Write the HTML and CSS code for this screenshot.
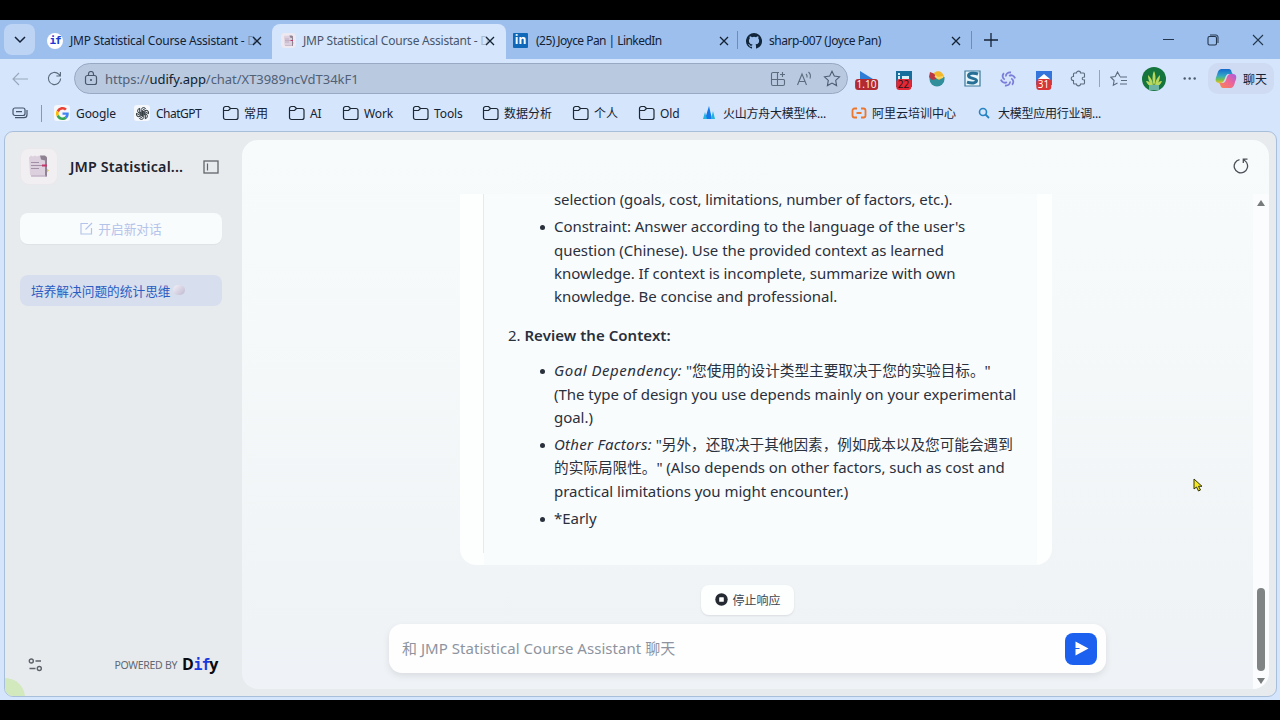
FILE: index.html
```html
<!DOCTYPE html>
<html lang="zh-CN">
<head>
<meta charset="utf-8">
<title>JMP Statistical Course Assistant</title>
<link rel="stylesheet" href="styles.css">
</head>
<body>
<svg width="0" height="0" class="defs">
  <symbol id="folder" viewBox="0 0 18 16"><path d="M1.500 12.500v-9a2 2 0 0 1 2-2h3l2 2H14a2 2 0 0 1 2 2v7a2 2 0 0 1-2 2H3.500a2 2 0 0 1-2-2zM1.500 5.500h5l2-2" fill="none" stroke="#1c2733" stroke-width="1.200"/></symbol>
  <symbol id="close" viewBox="0 0 10 10"><path d="M1 1l8 8M9 1l-8 8" stroke="#142234" stroke-width="1.300"/></symbol>
  <symbol id="doc" viewBox="0 0 24 24"><path d="M2 3l2-2 2 1 2-1 2 1 2-1 3 1h5v20H5l-2-2z" fill="#ddd0de"/><path d="M13 1l1 4 4 1v16h2V3l-2-2z" fill="#8f8292"/><path d="M4 22h15v-1H4z" fill="#b7a7ba"/><path d="M4 8h8M4 11h11M4 14h8" stroke="#a38fa6" stroke-width="1"/><path d="M15 10h5v2h-5z" fill="#c3366a"/><path d="M20 14l2 2-2 2z" fill="#e2cc55"/></symbol>
</svg>
<div class="browser">
  <div class="tabs">
    <div class="tab-menu"><svg width="14" height="9" viewBox="0 0 14 9"><path d="M2 2l5 5 5-5" fill="none" stroke="#132238" stroke-width="1.500"/></svg></div>
    <div class="tab first"><span class="if-badge">if</span><span class="tab-title">JMP Statistical Course Assistant - <i class="fade">D</i></span><svg class="x"><use href="#close"/></svg></div>
    <div class="tab active"><span class="doc-badge"><svg width="12" height="12"><use href="#doc"/></svg></span><span class="tab-title">JMP Statistical Course Assistant - <i class="fade">D</i></span><svg class="x"><use href="#close"/></svg></div>
    <div class="tab third"><span class="li">in</span><span class="tab-title li-title">(25) Joyce Pan | LinkedIn</span><svg class="x"><use href="#close"/></svg></div>
    <div class="tab fourth"><svg width="16" height="16" viewBox="0 0 16 16"><path fill="#12263c" d="M8 0a8 8 0 0 0-2.530 15.590c.4.070.55-.17.550-.38v-1.490c-2.220.480-2.690-.94-2.690-.94-.36-.92-.89-1.170-.89-1.170-.73-.5.060-.49.060-.49.800.060 1.230.830 1.230.830.710 1.220 1.870.870 2.330.660.070-.52.280-.87.510-1.070-1.780-.2-3.640-.89-3.640-3.950 0-.87.310-1.590.820-2.150-.08-.2-.36-1.010.080-2.120 0 0 .67-.21 2.200.820a7.600 7.600 0 0 1 4 0c1.530-1.030 2.200-.82 2.200-.82.440 1.110.160 1.920.080 2.120.510.560.820 1.280.820 2.150 0 3.070-1.870 3.750-3.650 3.950.290.250.540.730.540 1.480v2.190c0 .21.150.46.550.38A8 8 0 0 0 8 0z"/></svg><span class="tab-title gh-title">sharp-007 (Joyce Pan)</span><svg class="x"><use href="#close"/></svg></div>
    <svg class="plus" viewBox="0 0 14 14"><path d="M7 0v14M0 7h14" stroke="#142234" stroke-width="1.300"/></svg>
    <div class="window-btns">
      <svg width="11" height="11" viewBox="0 0 11 11"><path d="M0 5.500h11" stroke="#23364e"/></svg>
      <svg width="12" height="12" viewBox="0 0 12 12"><rect x="1" y="2.500" width="8.500" height="8.500" rx="1.500" fill="none" stroke="#23364e" stroke-width="1.100"/><path d="M3 1h6a2 2 0 0 1 2 2v6" fill="none" stroke="#23364e"/></svg>
      <svg width="12" height="12" viewBox="0 0 12 12"><path d="M1 1l10 10M11 1L1 11" stroke="#23364e" stroke-width="1.100"/></svg>
    </div>
  </div>

  <div class="toolbar">
    <svg class="back" width="16" height="14" viewBox="0 0 16 14"><path d="M16 7H1M7 1L1 7l6 6" fill="none" stroke="#98a7bb" stroke-width="1.100"/></svg>
    <svg class="reload" width="15" height="15" viewBox="0 0 16 16"><path d="M14.500 8A6.500 6.500 0 1 1 12.500 3.300L14 5M14.300 1v4.300H10" fill="none" stroke="#5b6a7d" stroke-width="1.200"/></svg>
    <div class="address">
      <svg width="14" height="15" viewBox="0 0 14 15"><rect x="1.500" y="4.500" width="11" height="9" rx="2" fill="none" stroke="#4a586b" stroke-width="1.200"/><path d="M4.500 4.500V3a2.500 2.500 0 0 1 5 0v1.500" fill="none" stroke="#4a586b" stroke-width="1.200"/><circle cx="7" cy="9" r="1" fill="#3e4c5e"/></svg>
      <span class="url">https://<b>udify.app</b>/chat/XT3989ncVdT34kF1</span>
      <svg width="16" height="16" viewBox="0 0 16 16"><path d="M9 1.500H3A1.500 1.500 0 0 0 1.500 3v10A1.500 1.500 0 0 0 3 14.500h10a1.500 1.500 0 0 0 1.500-1.500V9.500a1 1 0 0 0-1-1h-12M7.500 1.500v13M12.500 1v5M10 3.500h5" fill="none" stroke="#5c6b7e" stroke-width="1.100"/></svg>
      <svg width="17" height="16" viewBox="0 0 17 16"><path d="M1.500 14L6 3l4.500 11M3 10.500h6M10 3c1.300 1 1.300 2 1 3.500M12.500 1c2 1.700 2.300 4 1.500 6.500" fill="none" stroke="#5c6b7e" stroke-width="1.100"/></svg>
      <svg width="18" height="17" viewBox="0 0 18 17"><path d="M9 1.300l2.300 4.700 5.200.8-3.800 3.600.9 5.200L9 13.100l-4.600 2.500.9-5.200L1.500 6.800 6.700 6z" fill="none" stroke="#4c5c71" stroke-width="1.100"/></svg>
    </div>
    <div class="ext">
      <span class="ico jmp"><svg width="24" height="20" viewBox="0 0 24 20"><path d="M5 2l13 8H5z" fill="#2d7cd6"/></svg><em>1.10</em></span>
      <span class="ico lin"><svg width="18" height="20" viewBox="0 0 18 20"><path d="M1 2h16v16H1z" fill="#176d9c"/><path d="M3 4h2v2H3zM3 7h2v5H3zM7 7h2v5H7zM9 7h5v3H9z" fill="#d8effa"/></svg><em>22</em></span>
      <span class="ico"><svg width="18" height="18" viewBox="0 0 18 18"><path d="M1.500 7h15v2a7.500 7.500 0 0 1-15 0z" fill="#318e9b"/><path d="M1 7l1-5 5 2 1 5-4 1z" fill="#b93743"/><path d="M6 3c3-3 9-2 10 4l-5 3-3-2z" fill="#f2b82c"/><path d="M7 6l3 2 5-1" stroke="#f7d769" stroke-width="2" fill="none"/></svg></span>
      <span class="ico"><svg width="17" height="17" viewBox="0 0 17 17"><path d="M1 1h15v15H1z" fill="#e8f6fb" stroke="#3b789b" stroke-width="1.200"/><path d="M14 4C10 2.500 4.500 3 4.500 5.800c0 3.200 8 2 8 4.800 0 2.700-5 3-9.500 1.500" fill="none" stroke="#286f96" stroke-width="3"/></svg></span>
      <span class="ico"><svg width="16" height="16" viewBox="-8 -8 16 16" fill="none" stroke="#7b7ddb" stroke-width="1.800"><path id="petal" d="M-2-2.500C-2.500-5 0-7 3-6.500"/><use href="#petal" transform="rotate(60)"/><use href="#petal" transform="rotate(120)"/><use href="#petal" transform="rotate(180)"/><use href="#petal" transform="rotate(240)"/><use href="#petal" transform="rotate(300)"/></svg></span>
      <span class="ico cal"><svg width="18" height="20" viewBox="0 0 18 20"><path d="M1 2h16v14H1z" fill="#3475dc"/><path d="M3 10l6-5 6 5v5H3z" fill="white"/></svg><em>31</em></span>
      <span class="ico"><svg width="17" height="17" viewBox="0 0 17 17"><path d="M4.500 3h2c0-2.500 4-2.500 4 0h3A1 1 0 0 1 14.500 4v3c-3-.5-3 3.500 0 3v3a1 1 0 0 1-1 1h-3c0 2.500-4 2.500-4 0h-2a1 1 0 0 1-1-1v-2.500c-3 0-3-4 0-4V4a1 1 0 0 1 1-1z" fill="none" stroke="#5c6b7e" stroke-width="1.100"/></svg></span>
      <span class="divider"></span>
      <span class="ico"><svg width="18" height="16" viewBox="0 0 18 16"><path d="M10 5.500L7.500 1 5.300 5.500.8 6.200l3.300 3.300-.8 4.700L7.500 12M10 6h7M11 9.500h6M10 13h7" fill="none" stroke="#5c6b7e" stroke-width="1.100"/></svg></span>
      <span class="ico"><svg width="24" height="24" viewBox="0 0 24 24"><circle cx="12" cy="12" r="12" fill="#14753d"/><path d="M12 19C10 14 10 8 12 4c2 4 2 10 0 15zM11 19C8 17 6 13 6 8c3 3 5 6 5 11zM13 19c0-5 2-8 5-11 0 5-2 9-5 11zM10 19c-3 0-5-2-6-5 3 0 5 2 6 5zM14 19c1-3 3-5 6-5-1 3-3 5-6 5z" fill="#b9d85d"/><path d="M7 18h10v5H7z" fill="#6db5a2"/></svg></span>
      <span class="dots"><svg width="14" height="3" viewBox="0 0 14 3" fill="#4b5a6d"><circle cx="1.700" cy="1.500" r="1.200"/><circle cx="6.700" cy="1.500" r="1.200"/><circle cx="11.700" cy="1.500" r="1.200"/></svg></span>
    </div>
    <div class="copilot"><svg width="22" height="21" viewBox="0 0 22 21"><defs><linearGradient id="ca" x1="0" y1="0" x2="0" y2="1"><stop stop-color="#1668cf"/><stop offset=".5" stop-color="#32a9c4"/><stop offset=".75" stop-color="#6fc053"/><stop offset="1" stop-color="#f0c02c"/></linearGradient><linearGradient id="cb" x1="1" y1="0" x2="0" y2="1"><stop stop-color="#a65be4"/><stop offset=".5" stop-color="#f06693"/><stop offset="1" stop-color="#f88848"/></linearGradient></defs><path d="M7 1h7c3 0 2 4 4 5h-5c-3 0-3 9-7 9H4c-4 0-4-4-2-8 1-4 2-6 5-6z" fill="url(#ca)"/><path d="M15 20H8c-3 0-2-4-4-5h4c4 0 3-9 7-9h3c4 0 4 4 2 8-1 4-2 6-5 6z" fill="url(#cb)"/></svg><span>聊天</span></div>
  </div>

  <div class="bookmarks">
    <svg width="16" height="12" viewBox="0 0 16 12"><rect x="1" y="1" width="12" height="7.500" rx="2" fill="none" stroke="#45566c" stroke-width="1.200"/><path d="M4 4.700h6M3 10.700h9a3 3 0 0 0 3-3V3" fill="none" stroke="#45566c" stroke-width="1.200"/></svg>
    <span class="divider"></span>
    <div class="bm"><span class="tile"><svg width="13" height="13" viewBox="0 0 48 48"><path fill="#ea4335" d="M24 9.500c3.500 0 6.700 1.200 9.200 3.600l6.900-6.900A24 24 0 0 0 2.600 13.200l8 6.200A14.300 14.300 0 0 1 24 9.500z"/><path fill="#4285f4" d="M47 24.500c0-1.600-.2-3.100-.4-4.500H24v9h13c-.6 3-2.300 5.500-4.800 7.200l7.700 6c4.500-4.200 7.100-10.400 7.100-17.700z"/><path fill="#fbbc05" d="M10.500 28.600a14 14 0 0 1 0-9.200l-8-6.200a24 24 0 0 0 0 21.600z"/><path fill="#34a853" d="M24 48c6.500 0 12-2.100 15.900-5.800l-7.700-6A14.500 14.500 0 0 1 10.500 28.600l-8 6.200A24 24 0 0 0 24 48z"/></svg></span><span class="en">Google</span></div>
    <div class="bm gpt"><span class="tile"><svg width="13" height="13" viewBox="-8 -8 16 16" fill="none" stroke="#343c40" stroke-width="1.200"><path id="gp" d="M-1.500-1L-1.500-5a3 3 0 0 1 5.200-1.200L0-4v4"/><use href="#gp" transform="rotate(60)"/><use href="#gp" transform="rotate(120)"/><use href="#gp" transform="rotate(180)"/><use href="#gp" transform="rotate(240)"/><use href="#gp" transform="rotate(300)"/></svg></span><span class="en">ChatGPT</span></div>
    <div class="bm"><svg class="f"><use href="#folder"/></svg><span>常用</span></div>
    <div class="bm"><svg class="f"><use href="#folder"/></svg><span class="en">AI</span></div>
    <div class="bm"><svg class="f"><use href="#folder"/></svg><span class="en">Work</span></div>
    <div class="bm"><svg class="f"><use href="#folder"/></svg><span class="en">Tools</span></div>
    <div class="bm"><svg class="f"><use href="#folder"/></svg><span>数据分析</span></div>
    <div class="bm"><svg class="f"><use href="#folder"/></svg><span>个人</span></div>
    <div class="bm"><svg class="f"><use href="#folder"/></svg><span class="en">Old</span></div>
    <div class="bm volcano"><svg width="14" height="14" viewBox="0 0 14 14"><path d="M7 0l3 13H3z" fill="#1478ed"/><path d="M3 6l2 7H1zM11 5l2 8H9z" fill="#25b4db"/></svg><span>火山方舟大模型体...</span></div>
    <div class="bm ali"><svg width="16" height="12" viewBox="0 0 16 12"><path d="M6 1.500H3.500a2 2 0 0 0-2 2v5a2 2 0 0 0 2 2H6M10 1.500h2.500a2 2 0 0 1 2 2v5a2 2 0 0 1-2 2H10M5.500 6h5" fill="none" stroke="#ec762c" stroke-width="1.800"/></svg><span>阿里云培训中心</span></div>
    <div class="bm search"><svg width="12" height="12" viewBox="0 0 12 12"><circle cx="5" cy="5" r="3.500" fill="none" stroke="#2583c4" stroke-width="1.600"/><path d="M7.500 7.500L11 11" stroke="#2583c4" stroke-width="1.800"/></svg><span>大模型应用行业调...</span></div>
  </div>

  <div class="page">
    <aside class="sidebar">
      <div class="app-head"><div class="app-icon"><svg width="24" height="25"><use href="#doc"/></svg></div><strong>JMP Statistical...</strong><svg width="16" height="14" viewBox="0 0 16 14"><rect x="1" y="1" width="14" height="12" fill="none" stroke="#62666c" stroke-width="1.300"/><path d="M4.500 3.500v7" stroke="#62666c" stroke-width="1.200"/></svg></div>
      <div class="new-chat"><svg width="13" height="13" viewBox="0 0 13 13"><path d="M8 1.500H1v10.500h10.500V6M5.500 7.500l6.500-6.500" fill="none" stroke="#b4c3ea" stroke-width="1.200"/></svg><span>开启新对话</span></div>
      <div class="conversation"><span>培养解决问题的统计思维</span><i></i></div>
      <div class="side-foot"><svg width="15" height="14" viewBox="0 0 15 14"><g fill="none" stroke="#5c626a" stroke-width="1.400"><circle cx="3.300" cy="3" r="2"/><path d="M7.500 3H13M1.500 10.500h6"/><circle cx="11.300" cy="10.500" r="2"/></g></svg><span class="powered">POWERED BY</span><span class="dify">D<b>if</b>y</span></div>
      <div class="corner"></div>
    </aside>
    <main class="main">
      <header><svg width="16" height="16" viewBox="0 0 16 16"><path d="M6.500 1.600A6.700 6.700 0 1 0 13.500 4.500" fill="none" stroke="#4c5157" stroke-width="1.300"/><path d="M10.300 5V1.200H14.500M10.500 1.400l3.300 3.200" fill="none" stroke="#4c5157" stroke-width="1.300"/></svg></header>
      <div class="body">
        <div class="chat">
          <div class="scroll">
            <div class="bubble"><div class="thought">
              <ul class="cont">
                <li class="nomark">selection (goals, cost, limitations, number of factors, etc.).</li>
                <li>Constraint: Answer according to the language of the user's<br>question (Chinese). Use the provided context as learned<br>knowledge. If context is incomplete, summarize with own<br>knowledge. Be concise and professional.</li>
              </ul>
              <div class="step"><span>2.</span> <b>Review the Context:</b></div>
              <ul>
                <li><em class="g">Goal Dependency:</em> "<span class="cj">您使用的设计类型主要取决于您的实验目标。</span>"<br>(The type of design you use depends mainly on your experimental<br>goal.)</li>
                <li><em class="o">Other Factors:</em> "<span class="cj">另外，还取决于其他因素，例如成本以及您可能会遇到<br>的实际局限性。</span>" (Also depends on other factors, such as cost and<br>practical limitations you might encounter.)</li>
                <li>*Early</li>
              </ul>
            </div></div>
          </div>
          <div class="stop"><svg width="13" height="13" viewBox="0 0 13 13"><circle cx="6.500" cy="6.500" r="6.200" fill="#252932"/><rect x="4.200" y="4.200" width="4.600" height="4.600" rx=".6" fill="#fff"/></svg><span>停止响应</span></div>
          <div class="composer"><span>和 <u>JMP Statistical Course Assistant</u> 聊天</span><div class="send"><svg width="14" height="15" viewBox="0 0 14 15"><path d="M.5.500L13.500 7.500.5 14.500V8h4V6.900h-4z" fill="#fff"/></svg></div></div>
        </div>
        <div class="scrollbar"><svg width="8" height="6" viewBox="0 0 8 6"><path d="M4 0l4 6H0z" fill="#777b7c"/></svg><div class="thumb"></div><svg width="8" height="6" viewBox="0 0 8 6"><path d="M4 6l4-6H0z" fill="#777b7c"/></svg></div>
      </div>
    </main>
  </div>
  <svg class="cursor" width="10" height="14" viewBox="0 0 10 14"><path d="M1 1v10l2.500-2L5.500 13l2-1-2-3.700H9z" fill="#f4e820" stroke="#34350f" stroke-width="1"/></svg>
</div>
</body>
</html>
```
FILE: styles.css
```css
* { box-sizing: border-box; }
body { margin: 0; padding: 20px 0; width: 1280px; height: 720px; background: #000; overflow: hidden; font-family: "Noto Sans", "Noto Sans CJK SC", sans-serif; color: #142234; }
svg { display: block; flex: none; }
.defs { position: absolute; }
.browser { position: relative; height: 680px; display: flex; flex-direction: column; background: #d5e5fb; white-space: nowrap; }

.tabs { height: 39px; flex: none; display: flex; align-items: center; background: #9dbfed; font-size: 12px; }
.tab-menu { width: 31px; height: 31px; margin-left: 4px; border-radius: 8px; background: #bdd4f4; display: flex; align-items: center; justify-content: center; }
.tab { display: flex; align-items: center; height: 35px; margin-top: 4px; padding-bottom: 2px; flex: none; }
.tab-title { flex: 1; min-width: 0; margin-left: 7px; letter-spacing: -.23px; }
.fade { opacity: .3; font-style: normal; }
.x { width: 10px; height: 10px; }
.first { width: 237px; padding-left: 12px; padding-right: 10px; }
.if-badge { width: 16px; height: 16px; border-radius: 8px; background: #fff; color: #1b3bd6; font: bold 11px/15px "DejaVu Sans Mono", monospace; text-align: center; letter-spacing: -1px; }
.active { width: 234px; background: #d5e5fb; border-radius: 8px 8px 0 0; padding-left: 9px; padding-right: 11px; color: #47566b; }
.doc-badge { width: 15px; height: 15px; border-radius: 4px; background: #eee9f0; display: flex; align-items: center; justify-content: center; }
.third { width: 231px; padding-left: 7px; padding-right: 8px; }
.li { width: 15px; height: 15px; background: #0f68b8; border-radius: 1px; color: #fff; font: bold 12px/14px "Open Sans", sans-serif; text-align: center; }
.third .li-title { margin-left: 8px; letter-spacing: -.54px; }
.fourth .gh-title { letter-spacing: -.46px; }
.fourth { width: 233px; padding-left: 9px; padding-right: 9px; position: relative; }
.fourth::before, .fourth::after { content: ""; position: absolute; top: 7px; width: 1px; height: 18px; background: #6f8cb3; }
.fourth::before { left: 0; } .fourth::after { right: -2px; }
.plus { width: 14px; height: 14px; margin-left: 14px; }
.window-btns { margin-left: auto; margin-right: 16px; display: flex; gap: 33px; }

.toolbar { height: 39px; flex: none; display: flex; align-items: center; padding-left: 12px; }
.reload { margin: 0 1px 0 19px; }
.address { display: flex; align-items: center; width: 774px; height: 31px; margin-left: 11px; padding: 0 6px 0 9px; border: 1px solid #97a9c3; border-radius: 16px; background: #b9c9e0; flex: none; }
.url { flex: 1; margin-left: 7px; font-size: 13px; letter-spacing: -.04px; color: #506075; }
.url b { font-weight: 400; color: #0f1d2e; }
.address svg + svg { margin-left: 10px; }
.ext { display: grid; align-items: center; justify-items: center; grid-template-columns: 40px 33px 34px 37px 34px 37px 32px 9px 31px 40px 30px; }
.ext .ico:first-child { margin-left: -1px; }
.ico { position: relative; left: -1px; }
.ico em { position: absolute; left: 50%; bottom: -1px; transform: translateX(-50%); background: #d73536; color: #fff; border-radius: 3px; padding: 0 2px; font: 10px/11px "Open Sans", sans-serif; }
.ico.jmp em { background: #b22a32; }
.ico.lin em { background: #e42734; color: #22151c; }
.divider { width: 1px; height: 17px; background: #93a5be; }
.copilot { width: 66px; height: 31px; margin-left: 3px; border-radius: 10px; background: #cedbf2; display: flex; align-items: center; justify-content: center; gap: 6px; font-size: 12px; }

.bookmarks { height: 33px; flex: none; display: grid; align-items: center; grid-template-columns: 29px 13px 80px 88px 66px 54px 70px 70px 90px 66px 64px 149px 126px 130px; padding: 0 0 3px 12px; font-size: 12px; }
.bookmarks .divider { background: #8798b1; }
.bm { display: flex; align-items: center; }
.bm .f { width: 18px; height: 16px; margin-right: 4px; }
.bm .en { letter-spacing: -.1px; }
.gpt .en { letter-spacing: -.5px; }
.tile { width: 16px; height: 16px; background: #f4f8fd; border-radius: 3px; display: flex; align-items: center; justify-content: center; margin-right: 6px; }
.volcano svg { margin: 0 7px 0 0; } .ali svg { margin-right: 5px; } .search svg { margin: 0 8px 0 1px; }
.volcano span, .search span { letter-spacing: -.25px; }

.page { position: relative; width: 1273px; height: 566px; margin-left: 4px; border: 1px solid #a8bfdc; border-radius: 9px; background: #e8ebee; display: flex; overflow: hidden; }
.sidebar { position: relative; width: 237px; flex: none; padding: 16px 20px 0 15px; display: flex; flex-direction: column; }
.app-head { display: flex; align-items: center; height: 37px; }
.app-icon { width: 38px; height: 37px; background: #f1eff2; border: 1px solid #ebe8ec; border-radius: 9px; display: flex; align-items: center; justify-content: center; }
.app-head strong { flex: 1; margin-left: 12px; font-size: 14.300px; letter-spacing: .15px; color: #1c2331; font-weight: 600; }
.app-head > svg { margin-right: 3px; }
.new-chat { height: 31px; margin-top: 28px; border-radius: 8px; background: #f9fcfd; box-shadow: 0 1px 1px #dfe2e5; display: flex; align-items: center; justify-content: center; gap: 5px; padding-bottom: 1px; font-size: 12.700px; color: #b4c3ea; }
.conversation { height: 31px; margin-top: 31px; border-radius: 8px; background: #d7deed; display: flex; align-items: center; padding: 0 0 1px 11px; font-size: 12.700px; color: #2c5cc2; }
.conversation i { width: 12px; height: 10px; margin-left: 2px; border-radius: 5px; background: linear-gradient(135deg,#f4f1f8,#bfb8d0); }
.side-foot { margin-top: auto; margin-bottom: 21px; display: flex; align-items: center; height: 21px; padding-left: 8px; }
.powered { margin-left: 71.500px; font-size: 10.500px; letter-spacing: -.3px; color: #626873; }
.dify { margin-left: 5px; font: 700 16px/20px "Open Sans", sans-serif; letter-spacing: -.4px; color: #090b10; }
.dify b { color: #173be0; font-family: "DejaVu Sans Mono", monospace; font-size: 15px; letter-spacing: -1.200px; }
.corner { position: absolute; left: -20px; bottom: -22px; width: 40px; height: 40px; border-radius: 50%; background: #d2e8bd; }
.main { width: 1027px; height: 549px; margin-top: 8px; border-radius: 16px; overflow: hidden; background: linear-gradient(#f7fbfc,#f5f9fa 35%,#f0f4f6 80%,#eff2f6); display: flex; flex-direction: column; }
header { height: 54px; flex: none; display: flex; justify-content: flex-end; padding: 18px 20px 0; }
.body { flex: 1; display: flex; min-height: 0; }
.chat { flex: 1; display: flex; flex-direction: column; align-items: center; }
.scroll { height: 371px; flex: none; width: 592px; margin-left: 17px; }
.bubble { height: 371px; border-radius: 0 0 16px 16px; padding: 0 15px 12px 23px; background: linear-gradient(#f9fcfd,#f9fcfd) 24px 0 / 553px 371px no-repeat #fdfefe; }
.thought { height: 359px; border-left: 1px solid #e6eaed; font-size: 15px; line-height: 23.400px; letter-spacing: -.04px; color: #2a303c; }
.thought ul { list-style: none; margin: 0; padding-left: 70px; }
.cont { transform: translateY(-6px); }
li { position: relative; margin-bottom: 3.700px; }
li:not(.nomark)::before { content: ""; position: absolute; left: -14px; top: 10px; width: 5px; height: 5px; border-radius: 50%; background: #2a303c; }
.step { margin: 9.500px 0 11.500px 24px; }
.step b { font-weight: 600; letter-spacing: .05px; }
.g { letter-spacing: .52px; } .o { letter-spacing: .27px; }
.cj { font-size: 14.640px; letter-spacing: 0; }
.nomark { letter-spacing: -.1px; }
.stop { width: 93px; height: 30px; flex: none; margin: 20px 0 0 0; border-radius: 8px; background: #fdfefe; box-shadow: 0 1px 2px #d9dde1; display: flex; align-items: center; justify-content: center; gap: 4px; padding: 0 0 1px 1px; font-size: 12px; color: #414751; }
.composer { width: 717px; height: 49px; flex: none; margin-top: 9px; border-radius: 13px; background: #fefefe; box-shadow: 0 3px 6px #d9dde1; display: flex; align-items: center; justify-content: space-between; padding: 0 9px 0 13px; font-size: 15px; color: #8d949f; }
.composer span { padding-bottom: 2px; letter-spacing: .04px; }
.composer u { text-decoration: none; }
.send { width: 32px; height: 32px; border-radius: 8px; background: #1b60ee; display: flex; align-items: center; justify-content: center; padding-left: 1px; }
.scrollbar { width: 16px; background: #fafcfd; display: flex; flex-direction: column; align-items: center; padding: 6px 0 5px; }
.thumb { width: 8px; height: 83px; margin-top: auto; margin-bottom: 7px; border-radius: 4px; background: #818485; }
.cursor { position: absolute; left: 1193px; top: 458px; }
```
